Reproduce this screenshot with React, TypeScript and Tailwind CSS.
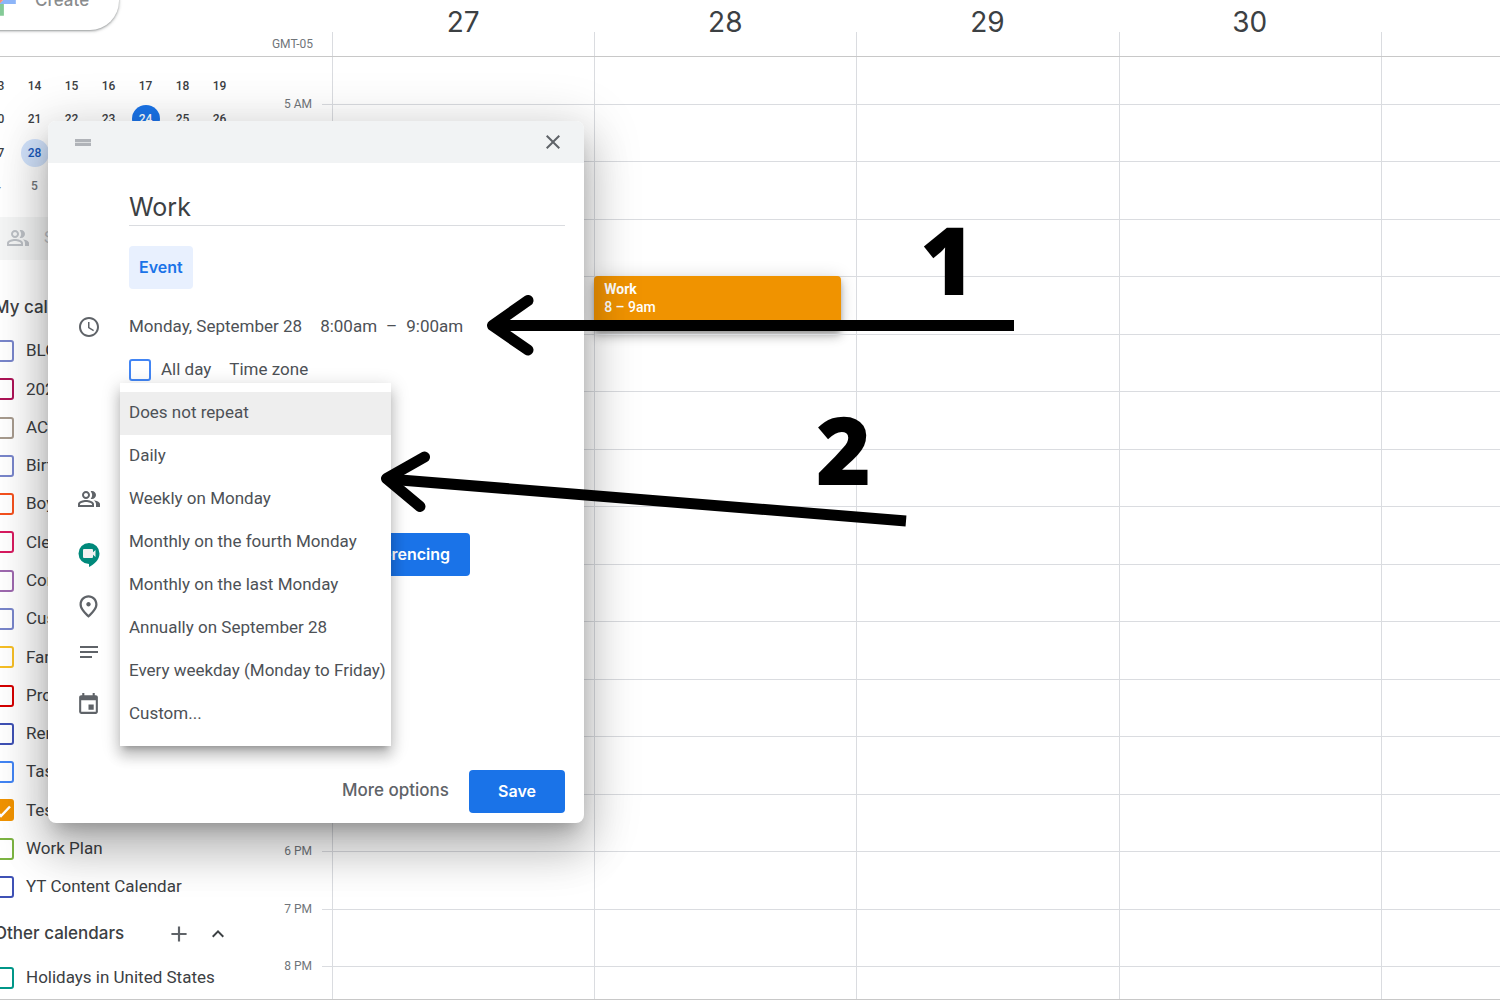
import { useState } from "react";
import type { ReactNode } from "react";
import {
  MdAdd,
  MdClose,
  MdEvent,
  MdExpandLess,
  MdNotes,
  MdOutlinePeopleAlt,
  MdOutlinePlace,
  MdSchedule,
} from "react-icons/md";

type Calendar = {
  name: string;
  border: string;
  checked?: boolean;
};

const calendars: Calendar[] = [
  { name: "BLOG", border: "border-[#7986cb]" },
  { name: "2020 Goals", border: "border-[#ad1457]" },
  { name: "ACTIVE", border: "border-[#a79b8e]" },
  { name: "Birthdays", border: "border-[#7986cb]" },
  { name: "Boys", border: "border-[#f4511e]" },
  { name: "Cleaning", border: "border-[#d81b60]" },
  { name: "Content", border: "border-[#9e69af]" },
  { name: "Customers", border: "border-[#7986cb]" },
  { name: "Family", border: "border-[#f6bf26]" },
  { name: "Projects", border: "border-[#d50000]" },
  { name: "Reminders", border: "border-[#3f51b5]" },
  { name: "Tasks", border: "border-[#4285f4]" },
  { name: "Test", border: "border-[#f09300] bg-[#f09300]", checked: true },
  { name: "Work Plan", border: "border-[#7cb342]" },
  { name: "YT Content Calendar", border: "border-[#3f51b5]" },
];

const miniDays = [
  13, 14, 15, 16, 17, 18, 19,
  20, 21, 22, 23, 24, 25, 26,
  27, 28, 29, 30, 1, 2, 3,
  4, 5, 6, 7, 8, 9, 10,
];

const hours = [
  "5 AM", "6 AM", "7 AM", "8 AM", "9 AM", "10 AM", "11 AM", "12 PM",
  "1 PM", "2 PM", "3 PM", "4 PM", "5 PM", "6 PM", "7 PM", "8 PM",
];

const days = [27, 28, 29, 30, 1];

const repeatOptions = [
  "Does not repeat",
  "Daily",
  "Weekly on Monday",
  "Monthly on the fourth Monday",
  "Monthly on the last Monday",
  "Annually on September 28",
  "Every weekday (Monday to Friday)",
  "Custom...",
];

function CreateButton() {
  return (
    <button className="relative -ml-10 -mt-7 h-[58px] w-[159px] rounded-full bg-white text-left shadow-[0_1px_2px_rgba(60,64,67,0.4),0_1px_3px_1px_rgba(60,64,67,0.15)]">
      <span className="flex items-center pl-5 opacity-60">
        <svg viewBox="0 0 36 36" className="size-[43px]">
          <path fill="#34A853" d="M16 16v14h4V20z" />
          <path fill="#4285F4" d="M30 16H20l-4 4h14z" />
          <path fill="#FBBC05" d="M6 16v4h10l4-4z" />
          <path fill="#EA4335" d="M20 16V6h-4v14z" />
        </svg>
        <span className="pl-3 font-[Inter] text-[17px] font-medium text-[#3c4043]">Create</span>
      </span>
    </button>
  );
}

function CalendarItem({ name, border, checked }: Calendar) {
  return (
    <label className="flex min-h-0 flex-1 items-center gap-3">
      <span className="relative size-[22px] shrink-0">
        <input
          type="checkbox"
          defaultChecked={checked}
          className={`block size-[22px] appearance-none rounded-[3px] border-2 ${border}`}
        />
        {checked && (
          <svg viewBox="0 0 22 22" className="absolute inset-0" fill="none" stroke="#fff" strokeWidth="2.500">
            <path d="M4 12l5 5l9-9.500" />
          </svg>
        )}
      </span>
      <span className="whitespace-nowrap">{name}</span>
    </label>
  );
}

function MiniDay({ day, index }: { day: number; index: number }) {
  let style = "text-[#3c4043]";
  if (index === 11) style = "bg-[#1a73e8] text-white";
  if (index === 15) style = "bg-[#d2e3fc] text-[#185abc]";
  if (index > 17) style = "text-[#70757a]";

  return (
    <div className="flex items-center justify-center">
      <button className={`size-7 shrink-0 rounded-full ${style}`}>{day}</button>
    </div>
  );
}

function Sidebar() {
  return (
    <aside className="flex w-[252px] shrink-0 flex-col text-[17px] text-[#3c4043]">
      <div className="-ml-[21px] mt-3 grid h-[134px] w-[259px] grid-cols-7 grid-rows-4 text-xs font-medium">
        {miniDays.map((day, i) => (
          <MiniDay key={i} day={day} index={i} />
        ))}
      </div>

      <div className="mt-[14px] flex h-[43px] items-center gap-[14px] bg-[#f5f6f6] pb-[2px] pl-[6px] text-[#bdc1c6]">
        <MdOutlinePeopleAlt size={24} />
        <input
          aria-label="Search for people"
          placeholder="Search for people"
          className="w-40 bg-transparent text-base placeholder-[#bdc1c6] outline-none"
        />
      </div>

      <h2 className="-ml-[6px] mt-6 flex h-12 items-center font-[Inter] text-[17px] font-medium">My calendars</h2>
      <div className="-ml-2 flex min-h-0 flex-1 flex-col">
        {calendars.map((calendar) => (
          <CalendarItem key={calendar.name} {...calendar} />
        ))}
      </div>

      <div className="flex h-14 items-center">
        <h2 className="-ml-[6px] flex-1 font-[Inter] text-[17px] font-medium">Other calendars</h2>
        <button aria-label="Add other calendars" className="text-[#5f6368]">
          <MdAdd size={26} />
        </button>
        <button aria-label="Collapse" className="ml-[14px] mr-[22px]">
          <MdExpandLess size={24} />
        </button>
      </div>
      <div className="-ml-2 mb-[5px] flex h-8">
        <CalendarItem name="Holidays in United States" border="border-[#009688]" />
      </div>
    </aside>
  );
}

function DayColumn({ day }: { day: number }) {
  return (
    <div className="flex flex-col border-l border-[#dadce0]">
      <div className="h-[47px] shrink-0" />
      {hours.map((hour) => (
        <div key={hour} className="min-h-0 flex-1 border-t border-[#dadce0] last:h-[33px] last:flex-none">
          {day === 28 && hour === "8 AM" && (
            <button className="-ml-px -mt-px block h-[55px] w-[247px] rounded bg-[#f09300] pb-3 pl-[10px] text-left text-sm leading-[18px] text-white shadow-[0_6px_10px_rgba(0,0,0,0.18),0_1px_18px_rgba(0,0,0,0.14),0_3px_5px_-1px_rgba(0,0,0,0.24)]">
              <span className="block font-bold">Work</span>
              <span className="block font-medium">8 – 9am</span>
            </button>
          )}
        </div>
      ))}
    </div>
  );
}

function Row({ icon, className = "", children }: { icon?: ReactNode; className?: string; children?: ReactNode }) {
  return (
    <div className={`grid h-[43px] shrink-0 grid-cols-[81px_1fr] items-center ${className}`}>
      <span className="flex justify-center text-[#5f6368]">{icon}</span>
      <div className="flex items-center">{children}</div>
    </div>
  );
}

function MeetIcon() {
  return (
    <svg viewBox="0 0 22 24" className="h-6 w-[22px]">
      <path fill="#00897b" d="M11 0a10.500 10.500 0 0 0 0 21v3c5-2.600 10.500-7 10.500-13.500A10.500 10.500 0 0 0 11 0z" />
      <path fill="#f1f1f1" d="M6 6h8a1 1 0 0 1 1 1v2.300L17.500 7v7L15 11.700V14a1 1 0 0 1-1 1H6a1 1 0 0 1-1-1V7a1 1 0 0 1 1-1z" />
    </svg>
  );
}

function EventDialog() {
  const [repeat, setRepeat] = useState("Does not repeat");

  return (
    <div
      role="dialog"
      aria-label="New event"
      className="absolute left-12 top-[121px] w-[536px] rounded-lg bg-white pb-[10px] text-[17px] text-[#4d5156] shadow-[0_28px_44px_4px_rgba(0,0,0,0.18),0_10px_52px_9px_rgba(0,0,0,0.15),0_12px_17px_-8px_rgba(0,0,0,0.24)]"
    >
      <div className="flex h-[42px] items-center justify-between rounded-t-lg bg-[#f1f3f4] pl-[27px] pr-[19px]">
        <div className="flex h-[7px] w-4 flex-col justify-between bg-[#dcdee0]">
          <div className="h-[3px] bg-[#b0b3b8]" />
          <div className="h-[3px] bg-[#b0b3b8]" />
        </div>
        <button aria-label="Close" className="text-[#5f6368]">
          <MdClose size={24} />
        </button>
      </div>

      <div className="pl-[81px] pr-[19px] pt-[23px]">
        <input
          aria-label="Title"
          defaultValue="Work"
          className="block h-10 w-full border-b border-[#dadce0] pt-[3px] font-[Inter] text-[25px] text-[#3c4043] outline-none"
        />
        <button className="mt-5 block h-[43px] rounded bg-[#e8f0fe] px-[10px] pb-[2px] font-[Inter] text-base font-semibold text-[#1a73e8]">
          Event
        </button>
      </div>

      <Row icon={<MdSchedule size={24} />} className="mt-4">
        <button>Monday, September 28</button>
        <button className="ml-[18px]">8:00am</button>
        <span className="mx-[9px]">–</span>
        <button>9:00am</button>
      </Row>
      <Row>
        <label className="flex items-center gap-[10px]">
          <input type="checkbox" className="size-[22px] appearance-none rounded-[3px] border-2 border-[#4285f4]" />
          All day
        </label>
        <button className="ml-[18px]">Time zone</button>
      </Row>
      <Row className="relative">
        <div
          role="listbox"
          aria-label="Repeat"
          className="absolute -top-2 left-18 w-[271px] bg-white pb-[10px] pt-[9px] shadow-[0_10px_12px_1px_rgba(0,0,0,0.16),0_4px_17px_2px_rgba(0,0,0,0.14),0_6px_6px_-4px_rgba(0,0,0,0.24)]"
        >
          {repeatOptions.map((option) => (
            <button
              key={option}
              role="option"
              aria-selected={repeat === option}
              onClick={() => setRepeat(option)}
              className={`block h-[43px] w-full whitespace-nowrap pb-[2px] pl-[9px] text-left ${
                repeat === option ? "bg-[#eeeeee]" : "bg-white"
              }`}
            >
              {option}
            </button>
          ))}
        </div>
      </Row>

      <Row icon={<MdOutlinePeopleAlt size={24} />} className="mt-[43px]" />
      <Row icon={<MeetIcon />} className="mt-[13px]">
        <button className="flex h-[43px] w-[341px] items-center justify-end whitespace-nowrap rounded bg-[#1a73e8] pb-[2px] pr-5 font-[Inter] text-base font-semibold text-white">
          Add video conferencing
        </button>
      </Row>
      <Row icon={<MdOutlinePlace size={27} />} className="mt-[9px]" />
      <Row icon={<MdNotes size={24} />} className="mt-[2px]" />
      <Row icon={<MdEvent size={25} />} className="mt-[10px]" />

      <div className="mt-11 flex justify-end pr-[19px] font-[Inter] text-base">
        <button className="h-[43px] px-5 pb-[2px] text-[17px] font-medium text-[#5f6368]">More options</button>
        <button className="h-[43px] w-24 rounded bg-[#1a73e8] pb-[2px] font-semibold text-white">Save</button>
      </div>
    </div>
  );
}

// numbered arrows that lie over the whole page
function Annotations() {
  return (
    <svg className="pointer-events-none absolute left-0 top-0 h-[1000px] w-[1500px]" fill="none" stroke="#000" strokeWidth="11">
      <path d="M495 325.500H1014" />
      <path d="M528 300.500L492.500 325.500L528 350" strokeLinecap="round" strokeLinejoin="round" />
      <path d="M388 479L906 521" />
      <path d="M424.500 457L386.500 478.500L420 506.500" strokeLinecap="round" strokeLinejoin="round" />
      <g className="font-['Open_Sans'] text-[94px] font-extrabold" fill="#000" stroke="none">
        <text x="920" y="295">1</text>
        <text x="816" y="485">2</text>
      </g>
    </svg>
  );
}

export default function App() {
  return (
    <main className="relative flex h-screen flex-col overflow-hidden border-b border-[#c8c8c8] bg-white font-[Roboto]">
      <header className="flex h-[57px] shrink-0 border-b border-[#c8c8c8]">
        <div className="flex w-[332px] shrink-0 justify-between">
          <CreateButton />
          <span className="self-end pb-1 pr-[19px] text-xs text-[#70757a]">GMT-05</span>
        </div>
        <div className="-mr-[143px] grid flex-1 grid-cols-5">
          {days.map((day) => (
            <div key={day} className="flex flex-col">
              <div className="h-8 text-center font-[Inter] text-[28px] leading-[44px] text-[#3c4043]">{day}</div>
              <div className="flex-1 border-l border-[#dadce0]" />
            </div>
          ))}
        </div>
      </header>

      <div className="flex min-h-0 flex-1">
        <Sidebar />
        <div className="flex w-20 shrink-0 flex-col text-xs leading-4 text-[#70757a]">
          <div className="h-[47px] shrink-0" />
          {hours.map((hour) => (
            <div key={hour} className="flex min-h-0 flex-1 justify-end gap-[10px] last:h-[33px] last:flex-none">
              <span className="-mt-2">{hour}</span>
              <div className="w-[10px] border-t border-[#dadce0]" />
            </div>
          ))}
        </div>
        <div className="-mr-[143px] grid flex-1 grid-cols-5">
          {days.map((day) => (
            <DayColumn key={day} day={day} />
          ))}
        </div>
      </div>

      <EventDialog />
      <Annotations />
    </main>
  );
}
